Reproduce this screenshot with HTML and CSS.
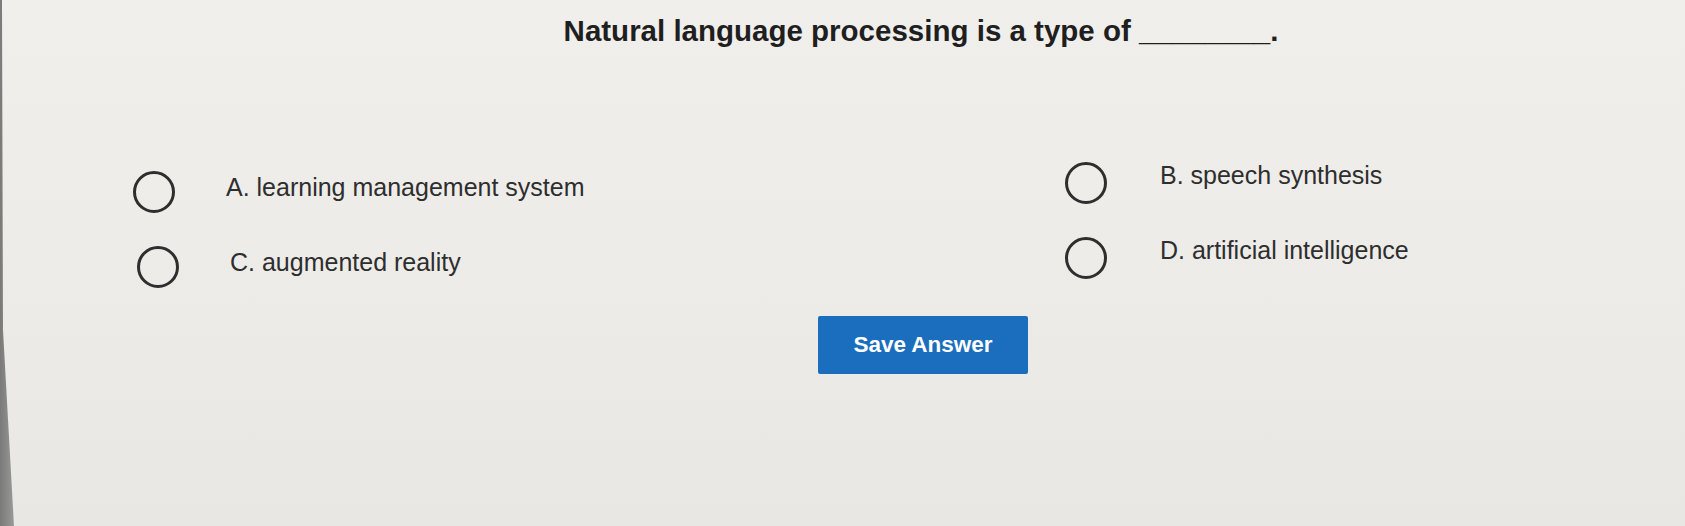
FILE: index.html
```html
<!DOCTYPE html>
<html lang="en">
<head>
<meta charset="utf-8">
<title>Question</title>
<link rel="stylesheet" href="styles.css">
</head>
<body>
<div class="edge"></div>
<main class="page">
  <h1 class="question">Natural language processing is a type of ________.</h1>
  <div class="options">
    <div class="col col-left">
      <label class="option"><span class="radio"></span><span class="label">A. learning management system</span></label>
      <label class="option shift"><span class="radio"></span><span class="label">C. augmented reality</span></label>
    </div>
    <div class="col col-right">
      <label class="option"><span class="radio"></span><span class="label">B. speech synthesis</span></label>
      <label class="option"><span class="radio"></span><span class="label">D. artificial intelligence</span></label>
    </div>
  </div>
  <div class="actions">
    <button class="save" type="button">Save Answer</button>
  </div>
</main>
</body>
</html>
```

FILE: styles.css
```css
html, body {
  margin: 0;
  padding: 0;
  height: 100%;
}
body {
  background: linear-gradient(180deg, #f0efec 0%, #ecebe8 60%, #e8e7e3 100%);
  font-family: "Liberation Sans", Arial, sans-serif;
  color: #2c2c2c;
  overflow: hidden;
}
.edge {
  position: fixed;
  left: 0;
  top: 0;
  width: 18px;
  height: 526px;
  background: linear-gradient(90deg, #7a7a7a, #a3a3a1);
  clip-path: polygon(0 0, 2px 0, 3px 330px, 14px 526px, 0 526px);
}
.page {
  display: flex;
  flex-direction: column;
}
.question {
  margin: 14px 0 0 0;
  padding-left: 157px;
  text-align: center;
  font-size: 29.5px;
  line-height: 34px;
  font-weight: 700;
  color: #1f1f1f;
  white-space: nowrap;
}
.options {
  margin-top: 114px;
  padding-left: 133px;
  display: grid;
  grid-template-columns: 932px 1fr;
  align-items: start;
}
.col {
  display: flex;
  flex-direction: column;
  gap: 33px;
}
.col-left {
  margin-top: 9px;
}
.option {
  display: flex;
  align-items: center;
  gap: 51px;
  height: 42px;
  cursor: pointer;
}
.option.shift {
  padding-left: 4px;
}
.radio {
  box-sizing: border-box;
  width: 42px;
  height: 42px;
  border: 3px solid #2e2e2e;
  border-radius: 50%;
  flex: none;
}
.col-right .option {
  gap: 53px;
}
.col-right .label {
  padding-bottom: 17px;
}
.label {
  font-size: 25px;
  line-height: 42px;
  padding-bottom: 10px;
  color: #2e2e2e;
  white-space: nowrap;
}
.actions {
  display: flex;
  justify-content: center;
  padding-left: 161px;
  margin-top: 28px;
}
.save {
  width: 210px;
  height: 58px;
  border: none;
  border-radius: 2px;
  background: #1b6dbe;
  color: #ffffff;
  font-family: "Liberation Sans", Arial, sans-serif;
  font-weight: 700;
  font-size: 22.5px;
  padding: 0;
  cursor: pointer;
}
```
